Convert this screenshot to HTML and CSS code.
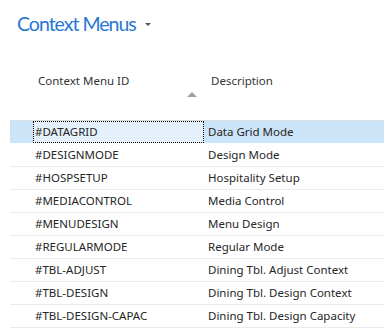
FILE: index.html
```html
<!DOCTYPE html>
<html lang="en">
<head>
  <meta charset="UTF-8">
  <title>Context Menus</title>
  <link rel="stylesheet" href="styles.css">
</head>
<body>
  <header class="page-title">
    <h1>Context Menus</h1>
    <span class="caret"></span>
  </header>

  <div class="grid">
    <div class="grid-head">
      <div class="sel"></div>
      <div class="col-id">Context Menu ID<span class="sort"></span></div>
      <div class="col-desc">Description</div>
    </div>
    <div class="grid-body">
      <div class="row selected">
        <div class="sel"></div>
        <div class="col-id focus">#DATAGRID</div>
        <div class="col-desc">Data Grid Mode</div>
      </div>
      <div class="row">
        <div class="sel"></div>
        <div class="col-id">#DESIGNMODE</div>
        <div class="col-desc">Design Mode</div>
      </div>
      <div class="row">
        <div class="sel"></div>
        <div class="col-id">#HOSPSETUP</div>
        <div class="col-desc">Hospitality Setup</div>
      </div>
      <div class="row">
        <div class="sel"></div>
        <div class="col-id">#MEDIACONTROL</div>
        <div class="col-desc">Media Control</div>
      </div>
      <div class="row">
        <div class="sel"></div>
        <div class="col-id">#MENUDESIGN</div>
        <div class="col-desc">Menu Design</div>
      </div>
      <div class="row">
        <div class="sel"></div>
        <div class="col-id">#REGULARMODE</div>
        <div class="col-desc">Regular Mode</div>
      </div>
      <div class="row">
        <div class="sel"></div>
        <div class="col-id">#TBL-ADJUST</div>
        <div class="col-desc">Dining Tbl. Adjust Context</div>
      </div>
      <div class="row">
        <div class="sel"></div>
        <div class="col-id">#TBL-DESIGN</div>
        <div class="col-desc">Dining Tbl. Design Context</div>
      </div>
      <div class="row">
        <div class="sel"></div>
        <div class="col-id">#TBL-DESIGN-CAPAC</div>
        <div class="col-desc">Dining Tbl. Design Capacity</div>
      </div>
    </div>
  </div>
</body>
</html>
```

FILE: styles.css
```css
body {
  margin: 0;
  padding: 0;
  background-color: #fff;
  font-family: "Noto Sans", "Open Sans", sans-serif;
  color: #262626;
  overflow: hidden;
}
.page-title {
  display: flex;
  align-items: flex-start;
  padding: 10px 0 0 17px;
  height: 36px;
}
.page-title h1 {
  margin: 0;
  font-family: Lato, "Noto Sans", sans-serif;
  font-size: 19.5px;
  font-weight: 400;
  letter-spacing: -1px;
  color: #2677d6;
  line-height: 28px;
}
.caret {
  width: 0;
  height: 0;
  margin-left: 9px;
  margin-top: 13px;
  border-left: 3px solid transparent;
  border-right: 3px solid transparent;
  border-top: 3px solid #555;
}
.grid {
  margin-left: 10px;
}
.grid-head {
  display: flex;
  height: 75px;
  padding-top: 27px;
  box-sizing: border-box;
  font-size: 11.5px;
  color: #333;
  border-bottom: 1px solid #dcdcdc;
}
.grid-head .col-id {
  position: relative;
  padding-left: 5px;
}
.grid-head .col-desc {
  padding-left: 7px;
}
.sort {
  position: absolute;
  right: 7px;
  top: 19px;
  width: 0;
  height: 0;
  border-left: 5px solid transparent;
  border-right: 5px solid transparent;
  border-bottom: 5px solid #a0a0a0;
}
.sel {
  width: 23px;
  flex: none;
}
.col-id {
  width: 171px;
  flex: none;
  box-sizing: border-box;
  padding-left: 2px;
}
.col-desc {
  flex: 1;
  padding-left: 4px;
}
.row {
  display: flex;
  height: 22px;
  line-height: 22px;
  font-size: 11.5px;
  border-bottom: 1px solid #ebebeb;
}
.row.selected {
  border-bottom-color: transparent;
}
.row.selected .sel {
  background-color: #cce4f7;
}
.row.selected .col-id {
  background-color: #e5f0fa;
}
.row.selected .col-desc {
  background-color: #cce4f7;
}
.focus {
  outline: 1px dotted #000;
  outline-offset: -1px;
}
```
